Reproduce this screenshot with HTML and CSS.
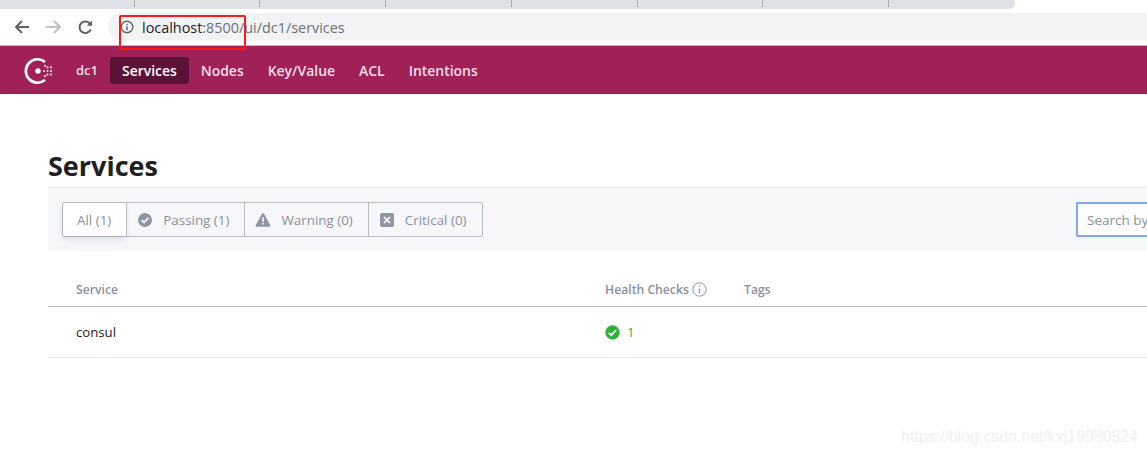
FILE: index.html
```html
<!DOCTYPE html>
<html lang="en">

<head>
    <meta charset="UTF-8">
    <title>Consul by HashiCorp</title>
    <link rel="stylesheet" href="styles.css">
</head>

<body>
    <div class="tabstrip">
        <div class="tabs">
            <span class="tab tab-first"></span>
            <span class="tab"></span>
            <span class="tab"></span>
            <span class="tab"></span>
            <span class="tab"></span>
            <span class="tab"></span>
            <span class="tab"></span>
            <span class="tab tab-last"></span>
        </div>
    </div>

    <div class="toolbar">
        <svg class="tool" width="18" height="18" viewBox="0 0 18 18"><path d="M17 9H4.500M10 3 4 9l6 6" fill="none" stroke="#5f6368" stroke-width="2"/></svg>
        <svg class="tool" width="18" height="18" viewBox="0 0 18 18"><path d="M2 9h13M10 3l6 6-6 6" fill="none" stroke="#bdc1c6" stroke-width="2"/></svg>
        <svg class="tool" width="18" height="18" viewBox="0 0 18 18"><path d="M14.700 11.500a5.800 5.800 0 1 1-.6-5.600" fill="none" stroke="#5f6368" stroke-width="2"/><path d="M16 2.500v5.200h-5.200z" fill="#5f6368"/></svg>
        <div class="omnibox">
            <svg width="14" height="14" viewBox="0 0 14 14"><circle cx="7" cy="7" r="5.800" fill="none" stroke="#5f6368" stroke-width="1.400"/><path d="M7 6.200v4M7 3.800v1.400" stroke="#5f6368" stroke-width="1.400"/></svg>
            <span class="url"><span class="host">localhost</span>:8500/ui/dc1/services</span>
        </div>
    </div>

    <nav class="topnav">
        <svg class="logo" width="30" height="30" viewBox="0 0 30 30">
            <path d="M21 6A11.700 11.700 0 1 0 21 24" fill="none" stroke="#fff" stroke-width="2.600"/>
            <circle cx="14" cy="15" r="2.700" fill="#fff"/>
            <g fill="#f3dbe6">
                <circle cx="20" cy="15" r="1.100"/>
                <circle cx="23.500" cy="15" r="1.100"/>
                <circle cx="27" cy="15" r="1.100"/>
                <circle cx="23.500" cy="11.400" r="1.100"/>
                <circle cx="27" cy="11.400" r="1.100"/>
                <circle cx="23.500" cy="18.600" r="1.100"/>
                <circle cx="27" cy="18.600" r="1.100"/>
                <circle cx="21" cy="9.800" r="1.100"/>
                <circle cx="21" cy="20.200" r="1.100"/>
            </g>
        </svg>
        <a class="nav-link dc">dc1</a>
        <a class="nav-link active">Services</a>
        <a class="nav-link">Nodes</a>
        <a class="nav-link">Key/Value</a>
        <a class="nav-link">ACL</a>
        <a class="nav-link">Intentions</a>
    </nav>

    <main class="content">
        <h1>Services</h1>

        <div class="filter-bar">
            <div class="filters">
                <label class="filter selected">All (1)</label>
                <label class="filter">
                    <svg width="16" height="16" viewBox="0 0 16 16"><circle cx="8" cy="8" r="7" fill="#8f96a3"/><path d="M4.600 8.200 7 10.600l4.400-4.800" fill="none" stroke="#fff" stroke-width="1.700"/></svg>
                    Passing (1)
                </label>
                <label class="filter">
                    <svg width="16" height="16" viewBox="0 0 16 16"><path d="M8 1.200c.5 0 .9.2 1.200.7l6 11c.5.9-.1 1.900-1.100 1.900H1.900c-1 0-1.600-1-1.100-1.900l6-11c.3-.5.7-.7 1.200-.7z" fill="#8f96a3"/><path d="M8 5.200v4.600M8 11v1.600" stroke="#fff" stroke-width="1.600"/></svg>
                    Warning (0)
                </label>
                <label class="filter">
                    <svg width="16" height="16" viewBox="0 0 16 16"><rect x="1" y="1" width="14" height="14" rx="2" fill="#8f96a3"/><path d="m5 5 6 6m0-6-6 6" stroke="#fff" stroke-width="1.700"/></svg>
                    Critical (0)
                </label>
            </div>
            <input class="search" type="text" placeholder="Search by name">
        </div>

        <div class="row head">
            <div class="col-service">Service</div>
            <div class="col-health">Health Checks
                <svg width="15" height="15" viewBox="0 0 15 15"><circle cx="7.500" cy="7.500" r="6.700" fill="none" stroke="#8f96a3"/><path d="M7.500 6.500v5M7.500 3.500v1.600" stroke="#8f96a3" stroke-width="1.200"/></svg>
            </div>
            <div class="col-tags">Tags</div>
        </div>
        <div class="row item">
            <div class="col-service name">consul</div>
            <div class="col-health passing">
                <svg width="15" height="15" viewBox="0 0 15 15"><circle cx="7.500" cy="7.500" r="7.200" fill="#2eb039"/><path d="M3.800 7.800 6.300 10.200l4.800-5" fill="none" stroke="#fff" stroke-width="1.700"/></svg>
                <span>1</span>
            </div>
            <div class="col-tags"></div>
        </div>
    </main>

    <div class="annotation"></div>
    <div class="watermark">https://blog.csdn.net/kxj19980524</div>
</body>

</html>
```

FILE: styles.css
```css
html,
body {
    height: 456px;
    overflow: hidden;
}

body {
    margin: 0;
    width: 1147px;
    background-color: #fff;
    font-family: 'Open Sans', 'Noto Sans', sans-serif;
    position: relative;
}

.tabstrip {
    height: 9px;
    padding-right: 132px;
}

.tabs {
    display: flex;
    height: 9px;
    background-color: #dee1e6;
    border-bottom-right-radius: 6px;
}

.tab {
    width: 126px;
    height: 7px;
    border-right: 1px solid #a9acb1;
    box-sizing: border-box;
}

.tab-first {
    width: 135px;
}

.tab-last {
    border-right: none;
}

.toolbar {
    height: 36px;
    display: flex;
    align-items: center;
    padding-left: 12px;
    gap: 14px;
    border-bottom: 1px solid #b8babd;
}

.omnibox {
    flex: 1;
    height: 28px;
    background-color: #f1f3f4;
    border-radius: 14px 0 0 14px;
    display: flex;
    align-items: center;
    padding-left: 12px;
    gap: 8px;
}

.url {
    font-size: 14.400px;
    color: #6c7176;
}

.host {
    color: #202124;
}

.topnav {
    height: 47px;
    padding: 1px 0 0 24px;
    background-color: #a02157;
    display: flex;
    align-items: center;
}

.logo {
    margin-right: 10px;
}

.nav-link {
    font-size: 13.950px;
    font-weight: 600;
    color: #f5dfe9;
    padding: 0 12px;
    height: 27px;
    line-height: 27px;
    border-radius: 3px;
}

.dc {
    font-size: 13px;
}

.active {
    background-color: #5c1237;
    color: #fff;
}

.content {
    padding: 52px 0 0 48px;
}

h1 {
    margin: 0;
    font-size: 27px;
    line-height: 40px;
    padding-bottom: 1px;
    font-weight: 700;
    color: #1f2024;
}

.filter-bar {
    height: 63px;
    background-color: #f6f7f9;
    border-top: 1px solid #eceef1;
    display: flex;
    align-items: center;
    justify-content: space-between;
    padding-left: 14px;
}

.filters {
    display: flex;
    height: 35px;
    border: 1px solid #b7bcca;
    border-radius: 2px;
    box-sizing: border-box;
}

.filter {
    display: flex;
    align-items: center;
    gap: 10px;
    padding: 0 15px 0 10px;
    font-size: 13.400px;
    color: #8a909c;
    border-left: 1px solid #b7bcca;
}

.filter.selected {
    background-color: #fff;
    border-left: none;
    padding: 0 15px 0 14px;
    box-shadow: 0 3px 6px rgba(31, 34, 41, 0.12);
}

.search {
    width: 71px;
    height: 35px;
    box-sizing: border-box;
    padding: 0 0 0 9px;
    border: 2px solid #81a8ec;
    border-right: none;
    border-radius: 2px 0 0 2px;
    font-family: inherit;
    font-size: 13.500px;
    background-color: #fff;
}

.search::placeholder {
    color: #8a909c;
}

.row {
    display: flex;
    align-items: center;
    padding-left: 28px;
    font-size: 12.200px;
}

.col-service {
    width: 529px;
}

.col-health {
    width: 139px;
    display: flex;
    align-items: center;
    gap: 3px;
}

.head {
    height: 55px;
    margin-top: 1px;
    padding-top: 20px;
    color: #8a909c;
    font-weight: 600;
    border-bottom: 1px solid #b7bcca;
    box-sizing: border-box;
}

.item {
    height: 51px;
    font-size: 13.200px;
    border-bottom: 1px solid #e4e6ea;
    box-sizing: border-box;
}

.name {
    color: #1f2024;
    font-weight: 500;
}

.passing {
    color: #2eb039;
    gap: 7px;
}

.annotation {
    position: absolute;
    left: 119px;
    top: 15px;
    width: 127px;
    height: 35px;
    box-sizing: border-box;
    border: 2px solid #fb1a1a;
    border-radius: 2px;
}

.watermark {
    position: absolute;
    right: 9px;
    top: 428px;
    font-family: 'Liberation Sans', sans-serif;
    font-size: 15.900px;
    color: #f0f0f0;
}
```
